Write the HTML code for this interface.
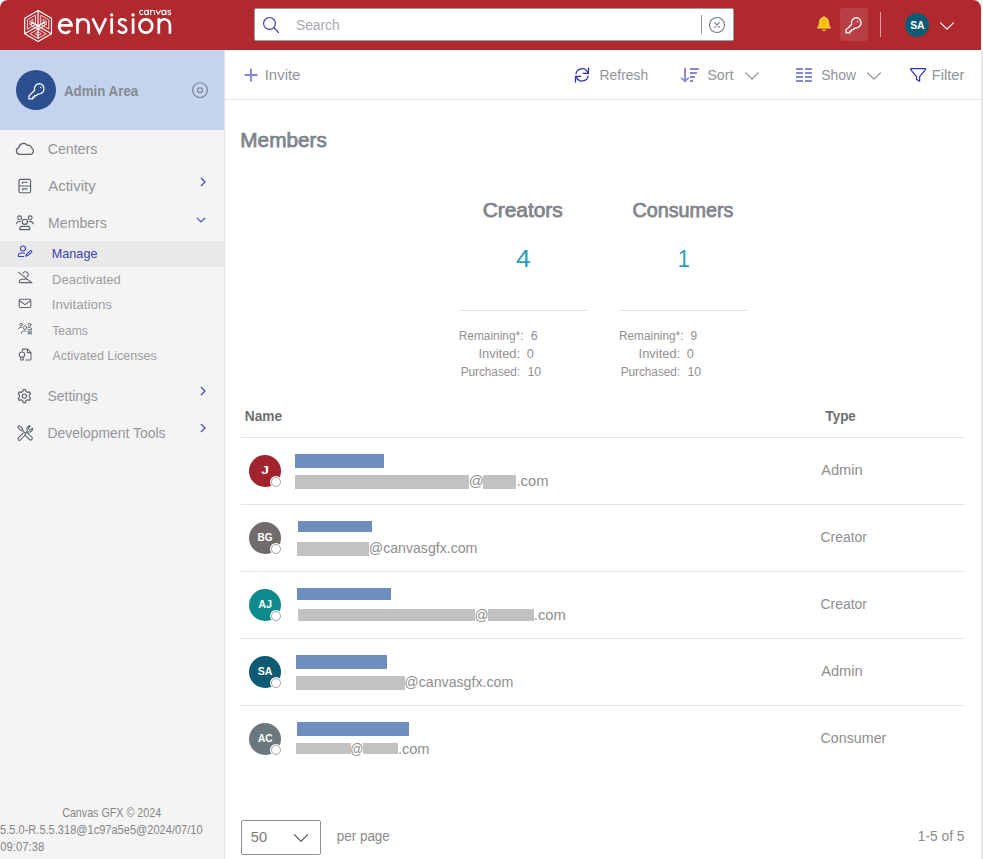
<!DOCTYPE html>
<html><head><meta charset="utf-8"><title>Members</title>
<style>
*{box-sizing:border-box;margin:0;padding:0}
html,body{width:983px;height:859px;overflow:hidden;background:#fff;font-family:"Liberation Sans",sans-serif}
.a{position:absolute}
.t{position:absolute;white-space:nowrap;line-height:1;transform-origin:0 50%}
.hl{position:absolute;height:1px;background:#e3e3e3;left:241px;width:724px}
.av{position:absolute;left:249px;width:32px;height:32px;border-radius:50%}
.st{position:absolute;left:271px;width:10.4px;height:10.4px;border-radius:50%;background:#fff;border:1.4px solid #9ea7ad;box-shadow:0 0 0 1px #fff}
.nm{position:absolute;background:#6e8fbe}
.em{position:absolute;background:#c2c2c2}
.ic{position:absolute;overflow:visible}
</style></head><body>
<div class="a" style="left:0;top:0;width:981px;height:50px;background:#b0292e;border-radius:8px 8px 0 0"></div>
<div class="a" style="left:0;top:50px;width:224px;height:809px;background:#f4f4f4"></div>
<div class="a" style="left:224px;top:50px;width:1px;height:809px;background:#e4e4e4"></div>
<div class="a" style="left:0;top:50px;width:224px;height:80px;background:#c5d4ee"></div>
<div class="a" style="left:981px;top:50px;width:2px;height:809px;background:#e8e8e8"></div><div class="a" style="left:981px;top:0;width:2px;height:50px;background:#f1f3f3"></div>
<div class="a" style="left:225px;top:99px;width:756px;height:1px;background:#e4e4e4"></div>
<svg class="ic" style="left:0;top:0" width="200" height="50" viewBox="0 0 200 50" fill="none" stroke="#fff" stroke-linejoin="round">
<polygon points="38.1,10.5 51.5,18.2 51.5,33.8 38.1,41.5 24.7,33.8 24.7,18.2" stroke-width="1.200"/>
<polygon points="35.4,24.4 35.4,15.2 27.4,19.8 27.4,29.1" stroke-width="0.95" opacity="0.9"/><polygon points="33.0,23.1 33.0,19.3 29.8,21.2 29.8,24.9" stroke-width="0.9" opacity="0.8"/><polygon points="40.8,24.4 40.8,15.2 48.8,19.8 48.8,29.1" stroke-width="0.95" opacity="0.9"/><polygon points="43.2,23.1 43.2,19.3 46.4,21.2 46.4,24.9" stroke-width="0.9" opacity="0.8"/><polygon points="38.1,29.1 30.0,33.8 38.1,38.4 46.2,33.8" stroke-width="0.95" opacity="0.9"/><polygon points="38.1,31.9 34.9,33.8 38.1,35.6 41.3,33.8" stroke-width="0.9" opacity="0.8"/>
<path d="M38.1 26.0L24.7 33.8M38.1 26.0L51.5 33.8" stroke-width="1.100"/>
<path d="M38.1 10.500V38.500" stroke-width="2" opacity="0.6"/>
<path d="M38.1 26.0L31.3 22.1M38.1 26.0L44.9 22.1" stroke-width="1.600" stroke-linecap="round"/>
<path d="M31.300 25.400L38.100 29.300L44.900 25.400" stroke-width="1.100" opacity="0.85"/><path d="M31.300 22.200V25.400M44.900 22.200V25.400" stroke-width="1.000" opacity="0.8"/><circle cx="38.1" cy="26.0" r="1.300" fill="#fff" stroke="none"/>
<g stroke-width="2.700">
<path d="M59.300 25.300H71.400M71.550 26.600A6.250 6.700 0 1 0 70.000 30.600" stroke-linecap="butt"/>
<path d="M77.500 18.300V33.800M77.500 24.900A5.550 5.650 0 0 1 88.600 24.900V33.800"/>
<path d="M92.700 18.300L99.400 32.400L106.000 18.300" stroke-linejoin="miter"/>
<path d="M111.700 18.300V33.800M133.100 18.300V33.800"/>
<path d="M126.200 21.300C124.800 18.600 119.200 18.500 119.000 22.000C118.800 25.800 126.500 25.000 126.300 29.700C126.100 33.500 120.000 33.700 118.200 30.200" stroke-width="2.500"/>
<ellipse cx="145.850" cy="26" rx="6.400" ry="6.650"/>
<path d="M158.800 18.300V33.800M158.800 24.900A5.550 5.650 0 0 1 169.900 24.900V33.800"/>
</g>
<circle cx="111.700" cy="14.900" r="1.700" fill="#fff" stroke="none"/>
<circle cx="133.000" cy="14.900" r="1.700" fill="#fff" stroke="none"/>
<g stroke-width="1.100" stroke-linecap="butt">
<path d="M143.000 10.900A2.000 2.200 0 1 0 143.000 13.900"/>
<ellipse cx="146.300" cy="12.400" rx="1.900" ry="2.200"/><path d="M148.350 9.800V15.100"/>
<path d="M150.700 9.800V15.100M150.700 12.200A1.900 1.900 0 0 1 154.500 12.200V15.100"/>
<path d="M156.000 9.900L158.300 14.300L160.600 9.900"/>
<ellipse cx="163.700" cy="12.400" rx="1.900" ry="2.200"/><path d="M165.850 9.800V15.100"/>
<path d="M170.500 10.900C170.000 9.900 167.900 9.900 167.900 11.200C167.900 12.500 170.700 12.100 170.700 13.500C170.700 14.900 168.300 15.000 167.600 13.800"/>
</g>
</svg>
<div class="a" style="left:254px;top:8px;width:480px;height:33px;background:#fff;border:1px solid #93a2aa;border-radius:2px"></div>
<svg class="ic" style="left:259px;top:13px" width="24" height="24" viewBox="0 0 24 24" fill="none" stroke="#343ab4" stroke-width="1.150" stroke-linecap="round"><circle cx="10.500" cy="10.400" r="5.900"/><path d="M14.900 14.700L19.500 19.500"/></svg>
<div class="a" style="left:701px;top:15px;width:1px;height:19px;background:#8e99a3"></div>
<svg class="ic" style="left:707px;top:15px" width="20" height="20" viewBox="0 0 20 20" fill="none" stroke="#727c85" stroke-width="1.100" stroke-linecap="round"><circle cx="10" cy="10" r="7.500"/><path d="M7.600 7.600L12.400 12.400M12.400 7.600L7.600 12.400"/></svg>
<svg class="ic" style="left:815.100px;top:13.800px" width="18" height="20" viewBox="0 0 20 22"><path d="M10 2.600c.7 0 1.100.4 1.100 1 2.700.6 4.200 2.800 4.200 5.600 0 2.600.7 4.300 1.800 5.400.4.400.1 1.100-.5 1.100H3.400c-.6 0-.9-.7-.5-1.100 1.100-1.100 1.800-2.800 1.800-5.400 0-2.800 1.500-5 4.200-5.600 0-.6.400-1 1.100-1z" fill="#ffc107" stroke="#fff4d0" stroke-width="0.500"/><path d="M7.900 17.200h4.200c0 1.100-.9 1.900-2.100 1.900s-2.100-.8-2.100-1.900z" fill="#ffc107"/></svg>
<div class="a" style="left:840px;top:8px;width:28px;height:33px;background:rgba(255,255,255,0.11);border-radius:3px"></div>
<svg class="ic" style="left:844px;top:15px" width="20" height="20" viewBox="0 0 20 20" fill="none" stroke="#fff" stroke-width="1.250" stroke-linejoin="round" stroke-linecap="round"><path d="M12.600 2.600a5.100 5.100 0 0 0-4.900 6.600L2 14.900v3h3.800v-1.700h1.700v-1.700h1.900l1.500-1.500a5.100 5.100 0 1 0 1.700-10.400z"/><circle cx="13.600" cy="6.500" r="0.800" fill="#fff" stroke="none"/></svg>
<div class="a" style="left:880px;top:12px;width:1px;height:25px;background:rgba(255,255,255,0.55)"></div>
<div class="a" style="left:905px;top:13px;width:24px;height:24px;border-radius:50%;background:#0c5b73"></div>
<svg class="ic" style="left:937px;top:15.600000000000001px" width="20" height="20" viewBox="0 0 20 20" fill="none" stroke="#fff" stroke-width="1.3" stroke-linecap="round" stroke-linejoin="round"><path d="M3.5999999999999996 6.9L10 13.1L16.4 6.9"/></svg>
<div class="a" style="left:16px;top:70px;width:40px;height:40px;border-radius:50%;background:#2b4f8f"></div>
<svg class="ic" style="left:26.500px;top:80.800px" width="20" height="20" viewBox="0 0 20 20" fill="none" stroke="#fff" stroke-width="1.250" stroke-linejoin="round" stroke-linecap="round"><path d="M12.600 2.600a5.100 5.100 0 0 0-4.900 6.600L2 14.900v3h3.800v-1.700h1.700v-1.700h1.900l1.500-1.500a5.100 5.100 0 1 0 1.700-10.400z"/><circle cx="13.600" cy="6.500" r="0.800" fill="#fff" stroke="none"/></svg>
<svg class="ic" style="left:190px;top:80px" width="20" height="20" viewBox="0 0 20 20" fill="none" stroke="#7b8088" stroke-width="1.100"><circle cx="10" cy="10.200" r="7.400"/><circle cx="10" cy="10.200" r="2.400"/></svg>
<div class="a" style="left:0;top:241px;width:224px;height:26px;background:#e9e9e9"></div>
<svg class="ic" style="left:196px;top:174.5px" width="14" height="14" viewBox="0 0 14 14" fill="none" stroke="#3f46b5" stroke-width="1.2" stroke-linecap="round" stroke-linejoin="round"><path d="M5.200 3.300L9 7L5.200 10.700"/></svg><svg class="ic" style="left:190.5px;top:209.8px" width="20" height="20" viewBox="0 0 20 20" fill="none" stroke="#3f46b5" stroke-width="1.2" stroke-linecap="round" stroke-linejoin="round"><path d="M6.1 8.05L10 11.95L13.9 8.05"/></svg><svg class="ic" style="left:196px;top:383.7px" width="14" height="14" viewBox="0 0 14 14" fill="none" stroke="#3f46b5" stroke-width="1.2" stroke-linecap="round" stroke-linejoin="round"><path d="M5.200 3.300L9 7L5.200 10.700"/></svg><svg class="ic" style="left:196px;top:420.8px" width="14" height="14" viewBox="0 0 14 14" fill="none" stroke="#3f46b5" stroke-width="1.2" stroke-linecap="round" stroke-linejoin="round"><path d="M5.200 3.300L9 7L5.200 10.700"/></svg>
<svg class="ic" style="left:0;top:130px" width="48" height="320" viewBox="0 130 48 320" fill="none" stroke="#5b626b" stroke-width="1.150" stroke-linecap="round" stroke-linejoin="round">
<path d="M19.600 154.400H30.300A3.300 3.300 0 0 0 31.700 148.200A3.300 3.300 0 0 0 27.300 145.400A4.700 4.700 0 0 0 18.800 147.600A3.500 3.500 0 0 0 19.600 154.400Z"/>
<rect x="19" y="179.300" width="11.600" height="13.400" rx="1.500"/><path d="M19 186H30.600M22.500 183.400V182.200H27.200M22.500 190V188.800H27.200"/>
<circle cx="19.600" cy="217.800" r="1.900"/><circle cx="30.200" cy="217.800" r="1.900"/><circle cx="24.800" cy="221.800" r="2.600"/>
<path d="M19.800 229.600V228.600A2.200 2.200 0 0 1 22 226.400H27.600A2.200 2.200 0 0 1 29.800 228.600V229.600ZM16.400 223.800A3.200 3.200 0 0 1 20.400 221.700M29.200 221.700A3.200 3.200 0 0 1 33.300 223.800"/>
<g stroke="#3a41c4" stroke-width="1.050"><circle cx="23" cy="248.400" r="2.500"/><path d="M23.600 256.500H18.400V255.600A2.600 2.600 0 0 1 21 253H24.400M25.700 256.200L26.300 254.300L30.200 250.900A0.900 0.900 0 0 1 31.600 252.100L27.600 255.600Z"/></g>
<g stroke="#5f666f" stroke-width="1.050"><path d="M23 273.200A2.800 2.800 0 1 1 26.800 277M31.500 282.600H19.400V281.800A2.700 2.700 0 0 1 22.100 279.200H26.500M18.200 272.200L32 282.900"/>
<rect x="19.200" y="299.300" width="11.600" height="8.200" rx="1.300"/><path d="M19.500 300.800L25 304.600L30.500 300.800"/>
<g stroke-width="0.9"><circle cx="21" cy="324.600" r="1.400"/><circle cx="29.600" cy="324.600" r="1.400"/><circle cx="25" cy="327.600" r="1.800"/><path d="M18.200 329A2.600 2.600 0 0 1 21.500 327.400M28.300 327.400A2.600 2.600 0 0 1 31.800 329M21.600 333.400V332.800A1.700 1.700 0 0 1 23.300 331.100H26M28 329.600H31.600M28 331.200H31.600M28 332.800H31.600M28 333.800H31.600"/></g>
<path d="M22.300 350.800V349.900A0.800 0.800 0 0 1 23.100 349.100H27.600L31 352.500V359.200A0.800 0.800 0 0 1 30.200 360H25.800M27.400 349.300V352.600H30.800"/><circle cx="22" cy="354.600" r="2.700"/><path d="M20.800 357.200V360H23.200V357.200"/></g>
<circle cx="24.400" cy="396.100" r="2.100"/>
<path d="M22.85 391.34L23.23 389.60L25.57 389.60L25.95 391.34L27.75 392.38L29.44 391.84L30.61 393.86L29.29 395.06L29.29 397.14L30.61 398.34L29.44 400.36L27.75 399.82L25.95 400.86L25.57 402.60L23.23 402.60L22.85 400.86L21.05 399.82L19.36 400.36L18.19 398.34L19.51 397.14L19.51 395.06L18.19 393.86L19.36 391.84L21.05 392.38Z"/>
<g stroke-width="1.050"><g transform="translate(20.300 428.200) rotate(45)"><rect x="-2.700" y="-1.150" width="5.400" height="2.300" rx="0.600"/></g><path d="M22.200 430.100L25.300 433.200"/><g transform="translate(28.700 436.400) rotate(45)"><rect x="-4.300" y="-1.700" width="8.600" height="3.400" rx="1.400"/></g><path d="M23.300 432.900L18.300 437.900A1.500 1.500 0 0 0 20.400 440L25.400 435"/><path d="M26.200 432L27.400 430.800A3.100 3.100 0 0 1 30.300 425.900L28.500 427.700L28.900 429.500L30.700 429.900L32.500 428.100A3.100 3.100 0 0 1 28.400 431.800L27.700 432.500"/></g>
</svg>
<svg class="ic" style="left:240px;top:60px" width="740" height="30" viewBox="240 60 740 30" fill="none" stroke-linecap="butt" stroke-linejoin="round">
<path d="M244.600 75H257.400M251 68.600V81.400" stroke="#8287d3" stroke-width="1.900"/>
<g stroke="#2d33b8" stroke-width="1.250" stroke-linecap="square"><path d="M576 73.600A6.200 6.200 0 0 1 587.600 72.200M588.500 68V73.400H583.300M588.200 76.200A6.200 6.200 0 0 1 576.600 77.600M575.500 81.800V76.400H580.700"/></g>
<g stroke="#8287d3" stroke-width="1.900"><path d="M685 68V80.600M690 69H698.900M690 73H696.900M690 77H695M690 81H693"/><path d="M681.500 78L685 81.300L688.500 78" stroke-width="1.600" stroke-linecap="round"/></g>
<g fill="#8287d3" stroke="none"><rect x="796" y="68" width="7" height="2"/><rect x="805" y="68" width="7" height="2"/><rect x="796" y="72" width="7" height="2"/><rect x="805" y="72" width="7" height="2"/><rect x="796" y="76" width="7" height="2"/><rect x="805" y="76" width="7" height="2"/><rect x="796" y="80" width="7" height="2"/><rect x="805" y="80" width="7" height="2"/></g>
<path d="M911.300 68.500H925Q926.200 68.600 925.500 69.700L919.600 76.700V81.300L916.500 79.400V76.700L910.700 69.700Q910.100 68.600 911.300 68.500Z" stroke="#2d33b8" stroke-width="1.250"/>
</svg>
<svg class="ic" style="left:742.3px;top:65.9px" width="20" height="20" viewBox="0 0 20 20" fill="none" stroke="#8a8a8a" stroke-width="1.2" stroke-linecap="round" stroke-linejoin="round"><path d="M3.8 6.8L10 13.2L16.2 6.8"/></svg><svg class="ic" style="left:864.1px;top:65.9px" width="20" height="20" viewBox="0 0 20 20" fill="none" stroke="#8a8a8a" stroke-width="1.2" stroke-linecap="round" stroke-linejoin="round"><path d="M3.5999999999999996 6.8L10 13.2L16.4 6.8"/></svg>
<div class="a" style="left:459px;top:310px;width:128px;height:1px;background:#e0e0e0"></div>
<div class="a" style="left:619px;top:310px;width:128px;height:1px;background:#e0e0e0"></div>
<div class="hl" style="top:437px"></div><div class="hl" style="top:504px"></div><div class="hl" style="top:571px"></div><div class="hl" style="top:638px"></div><div class="hl" style="top:705px"></div>
<div class="av" style="top:455px;background:#a1232d"></div><div class="st" style="top:476.9px"></div>
<div class="av" style="top:522px;background:#726b6b"></div><div class="st" style="top:543.9px"></div>
<div class="av" style="top:589px;background:#0d8a8c"></div><div class="st" style="top:610.9px"></div>
<div class="av" style="top:656px;background:#0c5b73"></div><div class="st" style="top:677.9px"></div>
<div class="av" style="top:723px;background:#6b787f"></div><div class="st" style="top:744.9px"></div>
<div class="nm" style="left:294.7px;top:454.0px;width:89.5px;height:14.0px"></div>
<div class="em" style="left:294.7px;top:475.2px;width:174.1px;height:13.6px"></div>
<div class="em" style="left:483.2px;top:475.2px;width:32.8px;height:13.6px"></div>
<div class="nm" style="left:297.9px;top:521.0px;width:73.9px;height:10.7px"></div>
<div class="em" style="left:297.0px;top:542.2px;width:71.9px;height:13.6px"></div>
<div class="nm" style="left:297.1px;top:587.8px;width:94.1px;height:12.2px"></div>
<div class="em" style="left:298.1px;top:608.6px;width:177.1px;height:12.4px"></div>
<div class="em" style="left:487.7px;top:608.6px;width:46.3px;height:12.4px"></div>
<div class="nm" style="left:296.0px;top:654.8px;width:91.0px;height:13.9px"></div>
<div class="em" style="left:296.0px;top:675.6px;width:108.6px;height:14.2px"></div>
<div class="nm" style="left:297.1px;top:721.8px;width:111.7px;height:13.9px"></div>
<div class="em" style="left:296.0px;top:742.6px;width:54.7px;height:11.4px"></div>
<div class="em" style="left:362.5px;top:742.6px;width:35.2px;height:11.4px"></div>
<div class="a" style="left:241px;top:820px;width:80px;height:35px;border:1px solid #8a9096;border-radius:2px;background:#fff"></div>
<svg class="ic" style="left:291.2px;top:827.8px" width="20" height="20" viewBox="0 0 20 20" fill="none" stroke="#555" stroke-width="1.2" stroke-linecap="round" stroke-linejoin="round"><path d="M3.4000000000000004 6.6L10 13.4L16.6 6.6"/></svg>
<div class="t" id="search" style="left:295px;top:18.00px;font-size:14px;color:#a7a9b6;transform:translateX(0.95px) scaleX(0.9865)">Search</div>
<div class="t" id="sa" style="left:910px;top:19.75px;font-size:10.5px;font-weight:bold;color:#fff;transform:translateX(0.15px) scaleX(0.9851)">SA</div>
<div class="t" id="s_admin" style="left:63px;top:83.75px;font-size:14.5px;font-weight:bold;color:#848a92;transform:translateX(0.91px) scaleX(0.9199)">Admin Area</div>
<div class="t" id="s_centers" style="left:47px;top:142.00px;font-size:14px;color:#93959a;transform:translateX(0.64px) scaleX(1.0137)">Centers</div>
<div class="t" id="s_activity" style="left:48px;top:179.00px;font-size:14px;color:#93959a;transform:translateX(0.14px) scaleX(1.0730)">Activity</div>
<div class="t" id="s_members" style="left:48px;top:216.00px;font-size:14px;color:#93959a;transform:translateX(0.12px) scaleX(1.0052)">Members</div>
<div class="t" id="s_manage" style="left:51px;top:246.80px;font-size:13px;color:#3a41b4;transform:translateX(0.79px) scaleX(0.9717)">Manage</div>
<div class="t" id="s_deact" style="left:52px;top:273.00px;font-size:13px;color:#9d9d9f;transform:translateX(0.04px) scaleX(1.0010)">Deactivated</div>
<div class="t" id="s_invit" style="left:51px;top:298.10px;font-size:13px;color:#9d9d9f;transform:translateX(0.72px) scaleX(1.0307)">Invitations</div>
<div class="t" id="s_teams" style="left:52px;top:323.90px;font-size:13px;color:#9d9d9f;transform:translateX(0.19px) scaleX(0.9310)">Teams</div>
<div class="t" id="s_actlic" style="left:52px;top:349.00px;font-size:13px;color:#9d9d9f;transform:translateX(0.49px) scaleX(0.9610)">Activated Licenses</div>
<div class="t" id="s_settings" style="left:47px;top:389.00px;font-size:14px;color:#93959a;transform:translateX(0.50px) scaleX(0.9949)">Settings</div>
<div class="t" id="s_dev" style="left:47px;top:426.00px;font-size:14px;color:#93959a;transform:translateX(0.51px) scaleX(0.9927)">Development Tools</div>
<div class="t" id="t_invite" style="left:264px;top:67.90px;font-size:14px;color:#919397;transform:translateX(0.70px) scaleX(1.0673)">Invite</div>
<div class="t" id="t_refresh" style="left:599px;top:67.90px;font-size:14px;color:#919397;transform:translateX(0.62px) scaleX(0.9886)">Refresh</div>
<div class="t" id="t_sort" style="left:707px;top:67.90px;font-size:14px;color:#919397;transform:translateX(0.15px) scaleX(1.0221)">Sort</div>
<div class="t" id="t_show" style="left:821px;top:67.90px;font-size:14px;color:#919397;transform:translateX(0.30px) scaleX(0.9914)">Show</div>
<div class="t" id="t_filter" style="left:931px;top:67.90px;font-size:14px;color:#919397;transform:translateX(0.72px) scaleX(1.0518)">Filter</div>
<div class="t" id="h_members" style="left:240px;top:129.80px;font-size:20px;color:#7e858c;transform:translateX(0.30px) scaleX(1.0375);-webkit-text-stroke:0.75px #7e858c">Members</div>
<div class="t" id="c_creators" style="left:482px;top:199.90px;font-size:20px;color:#7e858c;transform:translateX(0.63px) scaleX(1.0439);-webkit-text-stroke:0.75px #7e858c">Creators</div>
<div class="t" id="c_consumers" style="left:632px;top:199.90px;font-size:20px;color:#7e858c;transform:translateX(0.39px) scaleX(0.9883);-webkit-text-stroke:0.75px #7e858c">Consumers</div>
<div class="t" id="c_4" style="left:515px;top:246.50px;font-size:24px;color:#2e9cba;transform:translateX(0.93px) scaleX(1.0983)">4</div>
<div class="t" id="c_1" style="left:677px;top:246.50px;font-size:24px;color:#2e9cba;transform:translateX(0.84px) scaleX(0.9074)">1</div>
<div class="t" id="r1l" style="left:458px;top:329.80px;font-size:12px;color:#909090;transform:translateX(0.71px) scaleX(0.9901)">Remaining*:</div>
<div class="t" id="r1v" style="left:530px;top:329.80px;font-size:12px;color:#909090;transform:translateX(0.69px) scaleX(1.0315)">6</div>
<div class="t" id="r2l" style="left:478px;top:347.90px;font-size:12px;color:#909090;transform:translateX(0.44px) scaleX(1.0781)">Invited:</div>
<div class="t" id="r2v" style="left:526px;top:347.90px;font-size:12px;color:#909090;transform:translateX(0.82px) scaleX(1.0688)">0</div>
<div class="t" id="r3l" style="left:460px;top:366.00px;font-size:12px;color:#909090;transform:translateX(0.69px) scaleX(0.9785)">Purchased:</div>
<div class="t" id="r3v" style="left:527px;top:366.00px;font-size:12px;color:#909090;transform:translateX(0.44px) scaleX(1.0352)">10</div>
<div class="t" id="q1l" style="left:619px;top:329.80px;font-size:12px;color:#909090;transform:translateX(0.00px) scaleX(0.9858)">Remaining*:</div>
<div class="t" id="q1v" style="left:690px;top:329.80px;font-size:12px;color:#909090;transform:translateX(0.58px) scaleX(0.9923)">9</div>
<div class="t" id="q2l" style="left:638px;top:347.90px;font-size:12px;color:#909090;transform:translateX(0.61px) scaleX(1.0736)">Invited:</div>
<div class="t" id="q2v" style="left:686px;top:347.90px;font-size:12px;color:#909090;transform:translateX(0.86px) scaleX(1.0728)">0</div>
<div class="t" id="q3l" style="left:620px;top:366.00px;font-size:12px;color:#909090;transform:translateX(0.69px) scaleX(0.9785)">Purchased:</div>
<div class="t" id="q3v" style="left:687px;top:366.00px;font-size:12px;color:#909090;transform:translateX(0.48px) scaleX(1.0257)">10</div>
<div class="t" id="th_name" style="left:244px;top:409.00px;font-size:14px;font-weight:bold;color:#6e6e6e;transform:translateX(0.71px) scaleX(0.9808)">Name</div>
<div class="t" id="th_type" style="left:825px;top:409.00px;font-size:14px;font-weight:bold;color:#6e6e6e;transform:translateX(0.50px) scaleX(0.9586)">Type</div>
<div class="t" id="f1" style="left:62px;top:807.20px;font-size:12px;color:#858585;transform:translateX(0.16px) scaleX(0.8924)">Canvas GFX © 2024</div>
<div class="t" id="f2" style="left:0px;top:824.00px;font-size:12px;color:#858585;transform:translateX(0.08px) scaleX(0.9212)">5.5.0-R.5.5.318@1c97a5e5@2024/07/10</div>
<div class="t" id="f3" style="left:0px;top:840.60px;font-size:12px;color:#858585;transform:translateX(0.29px) scaleX(0.9412)">09:07:38</div>
<div class="t" id="p50" style="left:250px;top:829.70px;font-size:14px;color:#7a7a7a;transform:translateX(0.73px) scaleX(1.0476)">50</div>
<div class="t" id="pp" style="left:336px;top:829.00px;font-size:14px;color:#8a8a8a;transform:translateX(0.84px) scaleX(0.9579)">per page</div>
<div class="t" id="pr" style="left:917px;top:829.00px;font-size:14px;color:#8a8a8a;transform:translateX(0.79px) scaleX(0.9836)">1-5 of 5</div>
<div class="t" id="ty0" style="left:821px;top:463.40px;font-size:14px;color:#8e8e8e;transform:translateX(0.20px) scaleX(1.0431)">Admin</div>
<div class="t" id="ty1" style="left:820px;top:530.40px;font-size:14px;color:#8e8e8e;transform:translateX(0.57px) scaleX(0.9933)">Creator</div>
<div class="t" id="ty2" style="left:820px;top:597.40px;font-size:14px;color:#8e8e8e;transform:translateX(0.57px) scaleX(0.9933)">Creator</div>
<div class="t" id="ty3" style="left:821px;top:664.40px;font-size:14px;color:#8e8e8e;transform:translateX(0.20px) scaleX(1.0431)">Admin</div>
<div class="t" id="ty4" style="left:820px;top:731.40px;font-size:14px;color:#8e8e8e;transform:translateX(0.53px) scaleX(1.0187)">Consumer</div>
<div class="t" id="e0a" style="left:468px;top:474.00px;font-size:14px;color:#8e8e8e;transform:translateX(0.67px) scaleX(1.0644)">@</div>
<div class="t" id="e0b" style="left:516px;top:474.00px;font-size:14px;color:#8e8e8e;transform:translateX(0.48px) scaleX(1.0556)">.com</div>
<div class="t" id="e1a" style="left:368px;top:541.00px;font-size:14px;color:#8e8e8e;transform:translateX(0.86px) scaleX(1.0085)">@canvasgfx.com</div>
<div class="t" id="e2a" style="left:474px;top:608.00px;font-size:14px;color:#8e8e8e;transform:translateX(0.62px) scaleX(0.9941)">@</div>
<div class="t" id="e2b" style="left:533px;top:608.00px;font-size:14px;color:#8e8e8e;transform:translateX(0.85px) scaleX(1.0563)">.com</div>
<div class="t" id="e3a" style="left:404px;top:675.00px;font-size:14px;color:#8e8e8e;transform:translateX(0.25px) scaleX(1.0137)">@canvasgfx.com</div>
<div class="t" id="e4a" style="left:350px;top:742.00px;font-size:14px;color:#8e8e8e;transform:translateX(0.13px) scaleX(0.9269)">@</div>
<div class="t" id="e4b" style="left:397px;top:742.00px;font-size:14px;color:#8e8e8e;transform:translateX(0.91px) scaleX(1.0415)">.com</div>
<div class="t" id="av0" style="left:261px;top:464.50px;font-size:11px;font-weight:bold;color:#fff;transform:translateX(0.25px) scaleX(1.2497)">J</div>
<div class="t" id="av1" style="left:257px;top:531.50px;font-size:11px;font-weight:bold;color:#fff;transform:translateX(0.55px) scaleX(0.9153)">BG</div>
<div class="t" id="av2" style="left:258px;top:598.50px;font-size:11px;font-weight:bold;color:#fff;transform:translateX(0.17px) scaleX(0.9839)">AJ</div>
<div class="t" id="av3" style="left:257px;top:665.50px;font-size:11px;font-weight:bold;color:#fff;transform:translateX(0.74px) scaleX(0.9572)">SA</div>
<div class="t" id="av4" style="left:258px;top:732.50px;font-size:11px;font-weight:bold;color:#fff;transform:translateX(0.02px) scaleX(0.9180)">AC</div>
</body></html>
